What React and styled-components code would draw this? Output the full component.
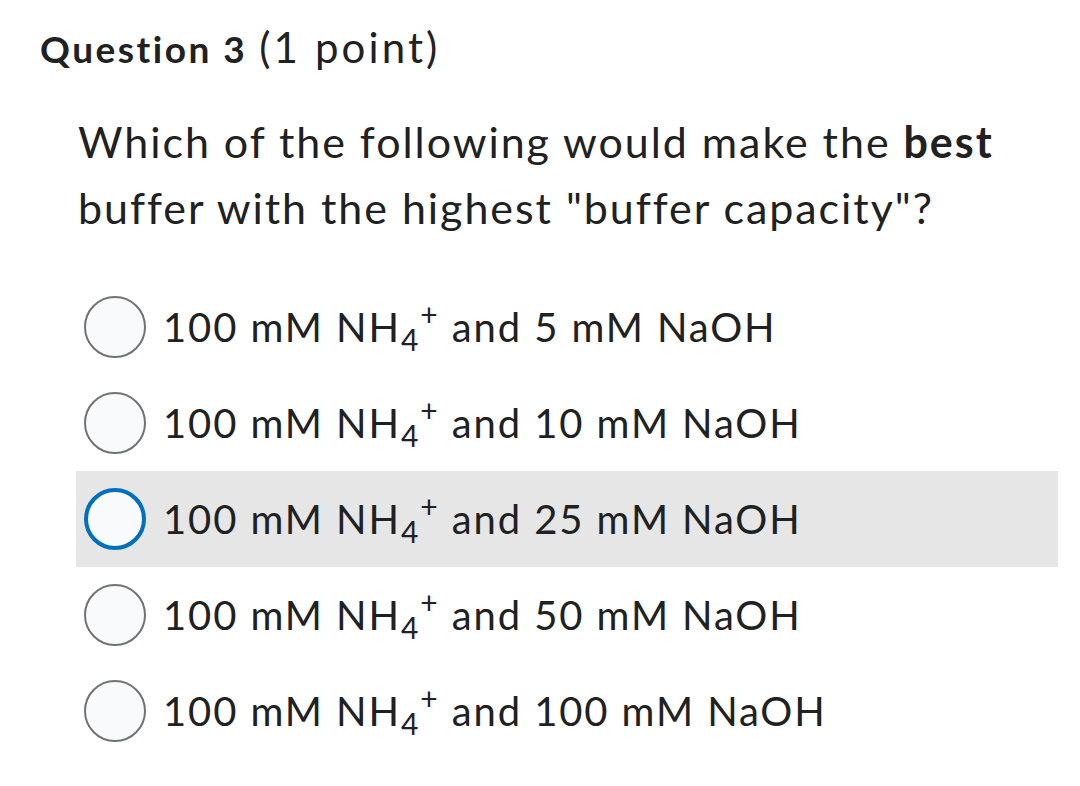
import React, { useState } from "react";
import styled, { createGlobalStyle } from "styled-components";

const GlobalStyle = createGlobalStyle`
  html, body {
    margin: 0;
    padding: 0;
    background: #fff;
  }
  body {
    font-family: Lato, "Noto Sans", sans-serif;
    color: #202122;
  }
`;

const Page = styled.div`
  width: 1080px;
  height: 786px;
  padding: 19px 22px 0 40px;
  box-sizing: border-box;
`;

const Heading = styled.h2`
  margin: 0;
  display: flex;
  align-items: baseline;
  gap: 12px;
  line-height: 56px;
  font-weight: 400;
`;
const QNum = styled.span`
  font-size: 37px;
  font-weight: 700;
  letter-spacing: 2.5px;
`;
const Points = styled.span`
  font-size: 42px;
  letter-spacing: 3.1px;
`;

const Prompt = styled.p`
  margin: 32px 0 0 38px;
  font-size: 43px;
  line-height: 66px;
  letter-spacing: 1.95px;
  & strong {
    font-weight: 700;
  }
`;

const Options = styled.div`
  margin: 38px 0 0 36px;
  display: flex;
  flex-direction: column;
`;

const Row = styled.label`
  display: flex;
  align-items: center;
  gap: 17px;
  height: 96px;
  padding-left: 8px;
  background: ${({ $active }) => ($active ? "#e6e6e6" : "transparent")};
  font-size: 40px;
  letter-spacing: 1.9px;
  cursor: pointer;
`;

const Radio = styled.span`
  flex: none;
  width: 62px;
  height: 62px;
  box-sizing: border-box;
  border-radius: 50%;
  background: #f9fafb;
  border: ${({ $active }) => ($active ? "4px solid #006fbf" : "2px solid #6e7376")};
`;

const Sub = styled.sub`
  font-size: 0.75em;
  vertical-align: -0.3em;
  line-height: 0;
`;
const Sup = styled.sup`
  font-size: 0.75em;
  vertical-align: 0.55em;
  line-height: 0;
`;

const choices = ["5", "10", "25", "50", "100"];

export default function App() {
  const [hover] = useState(2);
  return (
    <Page>
      <GlobalStyle />
      <Heading>
        <QNum>Question 3</QNum>
        <Points>(1 point)</Points>
      </Heading>
      <Prompt>
        Which of the following would make the <strong>best</strong> buffer
        with the highest "buffer capacity"?
      </Prompt>
      <Options>
        {choices.map((c, i) => (
          <Row key={c} $active={i === hover}>
            <Radio $active={i === hover} />
            <span>
              100 mM NH<Sub>4</Sub>
              <Sup>+</Sup> and {c} mM NaOH
            </span>
          </Row>
        ))}
      </Options>
    </Page>
  );
}
